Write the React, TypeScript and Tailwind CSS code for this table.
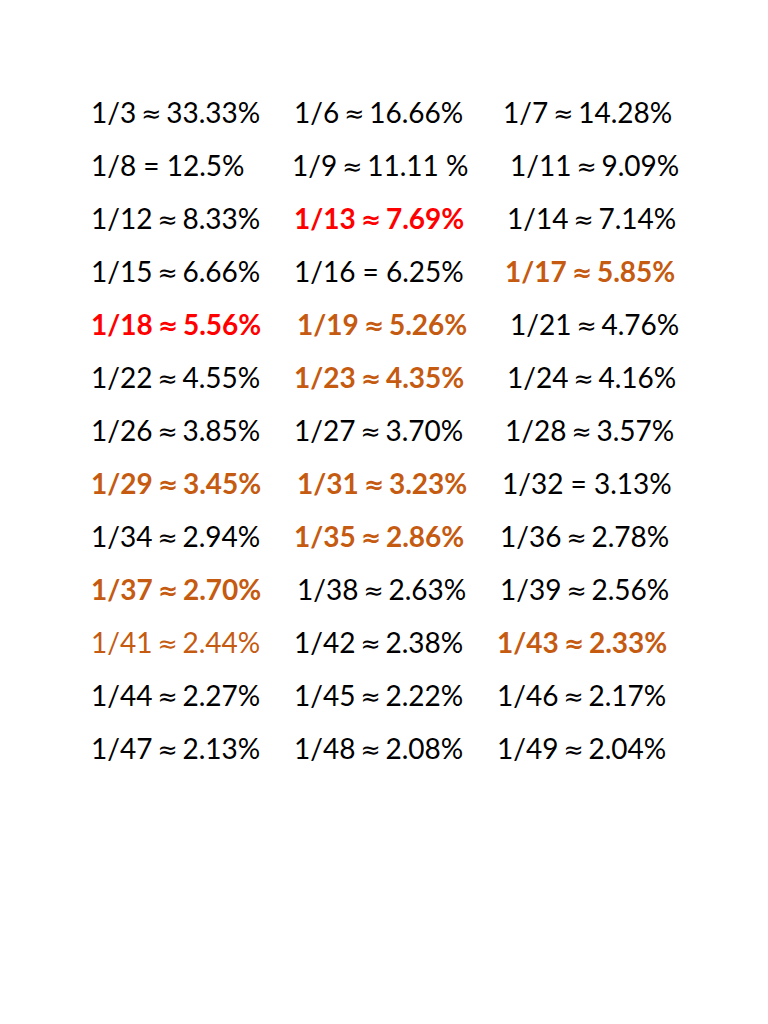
import React from "react";

type Cell = { t: string; c?: "red" | "orange" | "orangeThin"; w: string };

const K = "text-black";
const RED = "text-[#ff0000] font-bold";
const OR = "text-[#c55a11] font-bold";
const ORT = "text-[#c55a11]";

function cls(c?: Cell["c"]) {
  if (c === "red") return RED;
  if (c === "orange") return OR;
  if (c === "orangeThin") return ORT;
  return K;
}

const rows: Cell[][] = [
  [
    { t: "1/3 ≈ 33.33%", w: "w-[203px]" },
    { t: "1/6 ≈ 16.66%", w: "w-[209px]" },
    { t: "1/7 ≈ 14.28%", w: "w-[200px]" },
  ],
  [
    { t: "1/8 = 12.5%", w: "w-[201px]" },
    { t: "1/9 ≈ 11.11 %", w: "w-[218px]" },
    { t: "1/11 ≈ 9.09%", w: "w-[200px]" },
  ],
  [
    { t: "1/12 ≈ 8.33%", w: "w-[203px]" },
    { t: "1/13 ≈ 7.69%", c: "red", w: "w-[213px]" },
    { t: "1/14 ≈ 7.14%", w: "w-[200px]" },
  ],
  [
    { t: "1/15 ≈ 6.66%", w: "w-[203px]" },
    { t: "1/16 = 6.25%", w: "w-[211px]" },
    { t: "1/17 ≈ 5.85%", c: "orange", w: "w-[200px]" },
  ],
  [
    { t: "1/18 ≈ 5.56%", c: "red", w: "w-[206px]" },
    { t: "1/19 ≈ 5.26%", c: "orange", w: "w-[213px]" },
    { t: "1/21 ≈ 4.76%", w: "w-[200px]" },
  ],
  [
    { t: "1/22 ≈ 4.55%", w: "w-[203px]" },
    { t: "1/23 ≈ 4.35%", c: "orange", w: "w-[213px]" },
    { t: "1/24 ≈ 4.16%", w: "w-[200px]" },
  ],
  [
    { t: "1/26 ≈ 3.85%", w: "w-[203px]" },
    { t: "1/27 ≈ 3.70%", w: "w-[211px]" },
    { t: "1/28 ≈ 3.57%", w: "w-[200px]" },
  ],
  [
    { t: "1/29 ≈ 3.45%", c: "orange", w: "w-[206px]" },
    { t: "1/31 ≈ 3.23%", c: "orange", w: "w-[205px]" },
    { t: "1/32 = 3.13%", w: "w-[200px]" },
  ],
  [
    { t: "1/34 ≈ 2.94%", w: "w-[203px]" },
    { t: "1/35 ≈ 2.86%", c: "orange", w: "w-[206px]" },
    { t: "1/36 ≈ 2.78%", w: "w-[200px]" },
  ],
  [
    { t: "1/37 ≈ 2.70%", c: "orange", w: "w-[206px]" },
    { t: "1/38 ≈ 2.63%", w: "w-[203px]" },
    { t: "1/39 ≈ 2.56%", w: "w-[200px]" },
  ],
  [
    { t: "1/41 ≈ 2.44%", c: "orangeThin", w: "w-[203px]" },
    { t: "1/42 ≈ 2.38%", w: "w-[203px]" },
    { t: "1/43 ≈ 2.33%", c: "orange", w: "w-[200px]" },
  ],
  [
    { t: "1/44 ≈ 2.27%", w: "w-[203px]" },
    { t: "1/45 ≈ 2.22%", w: "w-[203px]" },
    { t: "1/46 ≈ 2.17%", w: "w-[200px]" },
  ],
  [
    { t: "1/47 ≈ 2.13%", w: "w-[203px]" },
    { t: "1/48 ≈ 2.08%", w: "w-[203px]" },
    { t: "1/49 ≈ 2.04%", w: "w-[200px]" },
  ],
];

function Text({ t }: { t: string }) {
  const parts = t.split(" ≈ ");
  if (parts.length === 1) return <>{t}</>;
  return (
    <>
      {parts[0]}
      <span className="font-['DejaVu_Sans',sans-serif] text-[24px] leading-none px-[5px] relative top-[-1px]">≈</span>
      {parts[1]}
    </>
  );
}

export default function App() {
  return (
    <div className="w-[768px] h-[1024px] bg-white pt-[85px] pl-[91px] font-['Lato',sans-serif] text-[28px]">
      {rows.map((r, i) => (
        <div key={i} className="flex h-[53px] items-center whitespace-nowrap">
          {r.map((c, j) => (
            <div key={j} className={`${c.w} shrink-0 ${cls(c.c)}`}>
              <Text t={c.t} />
            </div>
          ))}
        </div>
      ))}
    </div>
  );
}
